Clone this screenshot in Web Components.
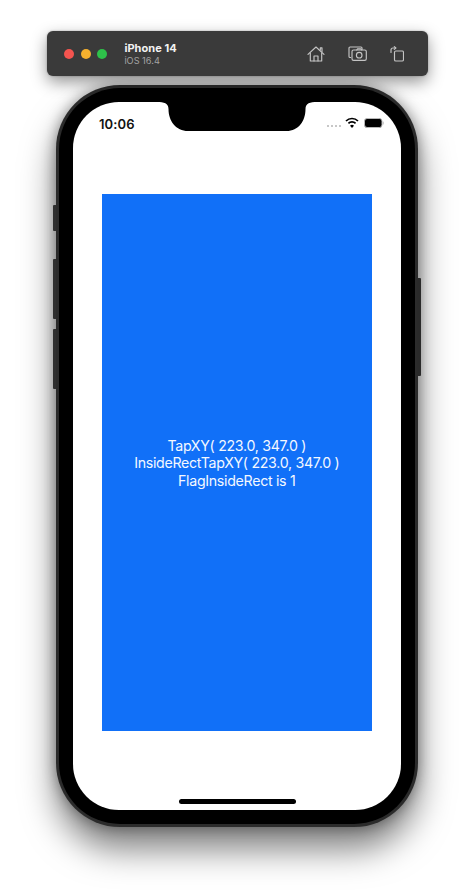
<!DOCTYPE html>
<html>
<head>
<meta charset="utf-8">
<title>iPhone 14</title>
<style>
  html, body { margin: 0; background: #fff; }
  body { width: 474px; height: 892px; overflow: hidden; font-family: Inter, "Liberation Sans", sans-serif; }
</style>
</head>
<body>
<sim-window>
  <sim-toolbar slot="toolbar" device="iPhone 14" os="iOS 16.4"></sim-toolbar>
  <sim-device>
    <status-bar time="10:06"></status-bar>
    <tap-panel>
      <div>TapXY( 223.0, 347.0 )</div>
      <div>InsideRectTapXY( 223.0, 347.0 )</div>
      <div>FlagInsideRect is 1</div>
    </tap-panel>
    <home-bar></home-bar>
  </sim-device>
</sim-window>

<script>
class SimWindow extends HTMLElement {
  constructor() {
    super();
    this.attachShadow({mode: "open"}).innerHTML = `
      <style>
        :host { display: flex; flex-direction: column; align-items: center; padding-top: 31px; }
      </style>
      <slot name="toolbar"></slot>
      <slot></slot>`;
  }
}

class SimToolbar extends HTMLElement {
  constructor() {
    super();
    this.attachShadow({mode: "open"});
  }
  connectedCallback() {
    this.shadowRoot.innerHTML = `
      <style>
        :host {
          display: flex; align-items: center; box-sizing: border-box;
          position: relative; z-index: 2;
          width: 381px; height: 45px; padding: 0 24px 0 17.5px;
          background: #3a3a3a; border-radius: 6px;
          box-shadow: 0 6px 16px rgba(0,0,0,.42), 0 0 2px rgba(0,0,0,.3);
          color: #fff;
        }
        .lights { display: flex; gap: 6.7px; margin-right: 17px; }
        .lights i { width: 10px; height: 10px; border-radius: 50%; display: block; }
        .names { flex: 1; display: flex; flex-direction: column; gap: .5px; padding-top: 1px; }
        .name { font-size: 11px; line-height: 13px; font-weight: 700; color: #f2f2f2; letter-spacing: .05px; }
        .os { font-size: 9.2px; line-height: 11px; color: #a3a3a3; }
        .tools { display: flex; align-items: center; gap: 22.5px; }
        .tools svg:nth-child(2) { margin-left: .5px; }
        svg { display: block; fill: none; stroke: #c4c4c4; stroke-width: 1.15; stroke-linejoin: round; stroke-linecap: round; }
      </style>
      <div class="lights">
        <i style="background:#f4544f"></i><i style="background:#f6b12e"></i><i style="background:#2ec14a"></i>
      </div>
      <div class="names">
        <span class="name">${this.getAttribute("device")}</span>
        <span class="os">${this.getAttribute("os")}</span>
      </div>
      <div class="tools">
        <svg width="18" height="16" viewBox="0 0 18 16">
          <path d="M1 8.300 9 1l8 7.300"/>
          <path d="M13.300 3.900V1.800h1.700v3.700"/>
          <path d="M3.300 7v8h11.400V7"/>
          <path d="M7 15v-5h4v5"/>
        </svg>
        <svg width="19" height="15" viewBox="0 0 19 15">
          <path d="M2.600 11.500H2a1 1 0 0 1-1-1V2a1 1 0 0 1 1-1h11a1 1 0 0 1 1 1v1.500"/>
          <rect x="4" y="4" width="14.300" height="10.300" rx="1.600"/>
          <circle cx="11.200" cy="9.200" r="2.800"/>
          <path d="M8.700 4l.8-1.100h3.400l.8 1.100"/>
        </svg>
        <svg width="14" height="16" viewBox="0 0 14 16">
          <rect x="4.500" y="5" width="9" height="10" rx="1.300"/>
          <path d="M1 6.500V4a2 2 0 0 1 2-2h2.500"/>
          <path d="M4.300.6 5.900 2 4.300 3.400"/>
        </svg>
      </div>`;
  }
}

class SimDevice extends HTMLElement {
  constructor() {
    super();
    this.attachShadow({mode: "open"}).innerHTML = `
      <style>
        :host {
          display: block; position: relative; box-sizing: border-box;
          width: 362px; height: 742px; margin-top: 9px;
          padding: 3px; border-radius: 64px;
          background: #2b2b2b;
          box-shadow: 0 22px 34px rgba(0,0,0,.5), 0 0 14px rgba(0,0,0,.38);
        }
        .bezel { height: 100%; box-sizing: border-box; padding: 14px; border-radius: 61px; background: #000; }
        .screen {
          height: 100%; display: flex; flex-direction: column; position: relative;
          background: #fff; border-radius: 46px; overflow: hidden;
        }
        .notch { position: absolute; top: 0; left: 84px; width: 160px; height: 29px; fill: #000; display: block; }
        .btn { position: absolute; left: -3.5px; width: 3.5px; background: #2f2f2f; border-radius: 1px 0 0 1px; }
        .btn.right { left: auto; right: -2.5px; top: 193px; height: 98px; border-radius: 0 1px 1px 0; background: #2a2a2a; }
      </style>
      <span class="btn" style="top:120px;height:26px"></span>
      <span class="btn" style="top:174px;height:60px"></span>
      <span class="btn" style="top:244px;height:60px"></span>
      <span class="btn right"></span>
      <div class="bezel">
        <div class="screen">
          <slot></slot>
          <svg class="notch" viewBox="0 0 160 29">
            <path d="M0 0h160c-7 0-11.500 1-11.500 7 0 12-7 22-19 22H31C19 29 11.500 19 11.500 7 11.500 1 7 0 0 0z"/>
          </svg>
        </div>
      </div>`;
  }
}

class StatusBar extends HTMLElement {
  constructor() {
    super();
    this.attachShadow({mode: "open"});
  }
  connectedCallback() {
    this.shadowRoot.innerHTML = `
      <style>
        :host {
          display: flex; justify-content: space-between; align-items: flex-start; box-sizing: border-box;
          height: 91.500px; padding: 13.500px 17.500px 0 26px; flex: none;
        }
        .time { font-size: 13px; line-height: 16px; font-weight: 600; color: #111; letter-spacing: .1px; }
        .right { display: flex; align-items: center; gap: 4.500px; padding-top: 1.500px; }
        .dots { display: flex; gap: 2px; margin-top: 7px; }
        .dots i { width: 2px; height: 2px; border-radius: 50%; background: #b5b5b5; display: block; }
        svg { display: block; }
      </style>
      <span class="time">${this.getAttribute("time")}</span>
      <div class="right">
        <div class="dots"><i></i><i></i><i></i><i></i></div>
        <svg width="14" height="11" viewBox="0 0 14 11">
          <path fill="none" stroke="#000" stroke-width="1.700" d="M1 4a8.500 8.500 0 0 1 12 0"/>
          <path fill="none" stroke="#000" stroke-width="1.700" d="M3.400 6.400a5 5 0 0 1 7.200 0"/>
          <path d="M7 11 5 8.700a3 3 0 0 1 4 0z" fill="#000"/>
        </svg>
        <svg width="20" height="10" viewBox="0 0 20 10">
          <rect x=".5" y=".5" width="17.500" height="9" rx="2.600" fill="#000" stroke="#b8b8b8"/>
          <rect x="18.700" y="3.500" width="1" height="3" rx=".5" fill="#b8b8b8"/>
        </svg>
      </div>`;
  }
}

class TapPanel extends HTMLElement {
  constructor() {
    super();
    this.attachShadow({mode: "open"}).innerHTML = `
      <style>
        :host {
          display: flex; flex-direction: column; justify-content: center; align-items: center;
          flex: none; height: 537.500px; margin: 0 29.500px 0 29px;
          background: #1170f8; color: #f4f8ff; text-align: center;
          font-size: 14.200px; line-height: 17.500px; letter-spacing: -.3px;
          font-family: Inter, "Liberation Sans", sans-serif;
        }
        .t { padding-top: 1px; }
      </style>
      <div class="t"><slot></slot></div>`;
  }
}

class HomeBar extends HTMLElement {
  constructor() {
    super();
    this.attachShadow({mode: "open"}).innerHTML = `
      <style>
        :host { display: flex; flex: 1; justify-content: center; align-items: flex-end; padding-bottom: 6.500px; }
        i { display: block; width: 117px; height: 4.500px; border-radius: 3px; background: #000; }
      </style>
      <i></i>`;
  }
}

customElements.define("sim-window", SimWindow);
customElements.define("sim-toolbar", SimToolbar);
customElements.define("sim-device", SimDevice);
customElements.define("status-bar", StatusBar);
customElements.define("tap-panel", TapPanel);
customElements.define("home-bar", HomeBar);
</script>
</body>
</html>
